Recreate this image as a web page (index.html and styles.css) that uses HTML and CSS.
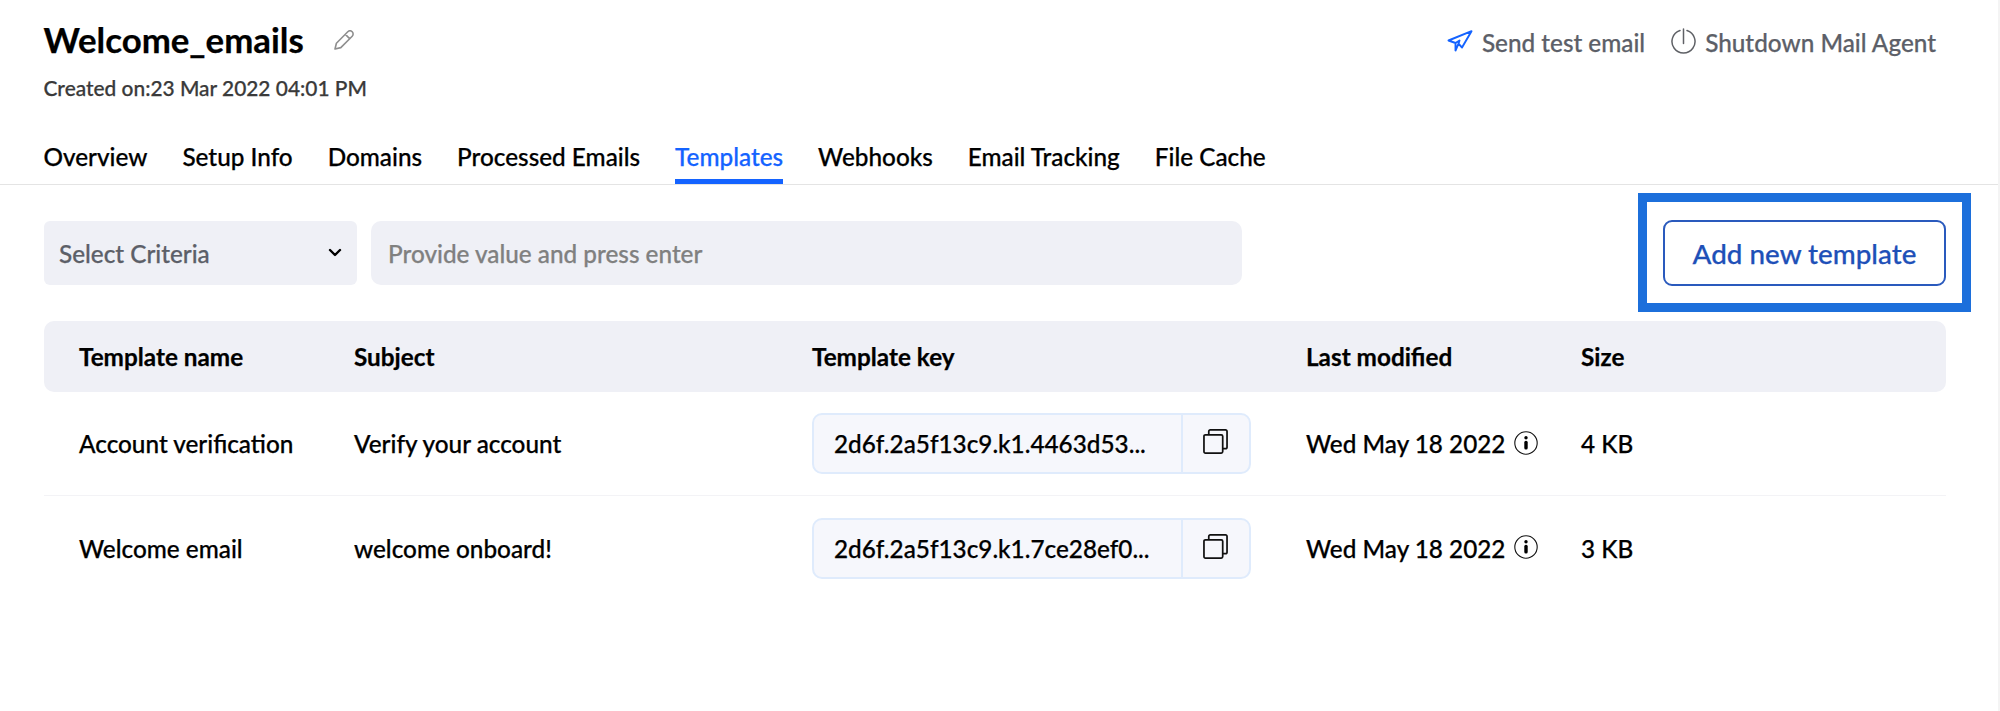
FILE: index.html
```html
<!DOCTYPE html>
<html lang="en">
<head>
  <meta charset="UTF-8">
  <meta name="viewport" content="width=device-width, initial-scale=1.0">
  <title>Welcome_emails - Templates</title>
  <link rel="stylesheet" href="styles.css">
</head>
<body>
  <div class="page">
    <header class="header">
      <div class="agent">
        <div class="agent-title">
          <h1>Welcome_emails</h1>
          <svg class="edit-icon" viewBox="0 0 20 20" fill="none" stroke="#8e8e8e" stroke-width="1.6" stroke-linejoin="round">
            <path d="M1 19l1.400-5.800L13.800 1.800a2.900 2.900 0 0 1 4.400 4.400L6.800 17.600z M11.400 4.400l4.200 4.200"/>
          </svg>
        </div>
        <p class="created">Created on:23 Mar 2022 04:01 PM</p>
      </div>
      <div class="header-actions">
        <a class="action">
          <svg class="send-icon" viewBox="0 0 26 22" fill="none" stroke="#1463ff" stroke-width="1.9" stroke-linejoin="round">
            <path d="M1.500 10.500L24.500 1.200 15 17.500l-3.500-3.800L8.500 20.500V13z M8.500 13L12.500 10.500 11.500 13.700"/>
          </svg>
          Send test email
        </a>
        <a class="action">
          <svg class="power-icon" viewBox="0 0 25 26" fill="none" stroke="#5f6166" stroke-width="1.5" stroke-linecap="round">
            <path d="M9 2.500a11.500 11.500 0 1 0 7 0M12.500 1v14.500"/>
          </svg>
          Shutdown Mail Agent
        </a>
      </div>
    </header>

    <nav class="tabs">
      <a>Overview</a>
      <a>Setup Info</a>
      <a>Domains</a>
      <a>Processed Emails</a>
      <a class="active">Templates</a>
      <a>Webhooks</a>
      <a>Email Tracking</a>
      <a>File Cache</a>
    </nav>

    <main class="content">
      <div class="toolbar">
        <div class="criteria">
          <span>Select Criteria</span>
          <svg class="chevron" viewBox="0 0 14 10" fill="none" stroke="#000" stroke-width="2.4" stroke-linecap="round" stroke-linejoin="round">
            <path d="M2 2l5 5 5-5"/>
          </svg>
        </div>
        <input class="search" type="text" placeholder="Provide value and press enter">
        <div class="highlight">
          <button type="button" class="add-button">Add new template</button>
        </div>
      </div>

      <div class="table">
        <div class="row table-head">
          <div>Template name</div>
          <div>Subject</div>
          <div>Template key</div>
          <div>Last modified</div>
          <div>Size</div>
        </div>
        <div class="row">
          <div>Account verification</div>
          <div>Verify your account</div>
          <div>
            <div class="key-box">
              <span class="key">2d6f.2a5f13c9.k1.4463d53...</span>
              <span class="copy">
                <svg viewBox="0 0 26 26" fill="none" stroke="#111" stroke-width="1.8">
                  <rect x="1" y="6" width="19.500" height="19" rx="1.5"/>
                  <path d="M6 6V2.500A1.500 1.500 0 0 1 7.500 1H23.500A1.500 1.500 0 0 1 25 2.500V19A1.500 1.500 0 0 1 23.500 20.500H20.500"/>
                </svg>
              </span>
            </div>
          </div>
          <div class="modified">
            Wed May 18 2022
            <svg class="info-icon" viewBox="0 0 24 24">
              <circle cx="12" cy="12" r="11.200" fill="none" stroke="#111" stroke-width="1.1"/>
              <circle cx="12" cy="6.800" r="1.700"/>
              <rect x="10.300" y="9.800" width="3.400" height="8.800" rx="1.600"/>
            </svg>
          </div>
          <div>4 KB</div>
        </div>
        <div class="row">
          <div>Welcome email</div>
          <div>welcome onboard!</div>
          <div>
            <div class="key-box">
              <span class="key">2d6f.2a5f13c9.k1.7ce28ef0...</span>
              <span class="copy">
                <svg viewBox="0 0 26 26" fill="none" stroke="#111" stroke-width="1.8">
                  <rect x="1" y="6" width="19.500" height="19" rx="1.5"/>
                  <path d="M6 6V2.500A1.500 1.500 0 0 1 7.500 1H23.500A1.500 1.500 0 0 1 25 2.500V19A1.500 1.500 0 0 1 23.500 20.500H20.500"/>
                </svg>
              </span>
            </div>
          </div>
          <div class="modified">
            Wed May 18 2022
            <svg class="info-icon" viewBox="0 0 24 24">
              <circle cx="12" cy="12" r="11.200" fill="none" stroke="#111" stroke-width="1.1"/>
              <circle cx="12" cy="6.800" r="1.700"/>
              <rect x="10.300" y="9.800" width="3.400" height="8.800" rx="1.600"/>
            </svg>
          </div>
          <div>3 KB</div>
        </div>
      </div>
    </main>
  </div>
</body>
</html>
```
FILE: styles.css
```css
* {
  box-sizing: border-box;
}

body {
  margin: 0;
  font-family: Lato, sans-serif;
  font-size: 24.3px;
  font-weight: 500;
  -webkit-text-stroke: 0.25px;
  color: #000;
  background-color: #fff;
}

.page {
  height: 711px;
  border-right: 2px solid #f4f4f4;
  overflow: hidden;
}

.header {
  display: flex;
  justify-content: space-between;
  height: 136px;
  padding: 19px 62px 0 43.5px;
}

.agent-title {
  display: flex;
  align-items: center;
  gap: 30px;
}

h1 {
  margin: 0;
  font-size: 34.8px;
  line-height: 42px;
  font-weight: bold;
}

.edit-icon {
  width: 20px;
  height: 20px;
}

.created {
  margin: 14px 0 0;
  font-size: 20.9px;
  line-height: 26px;
  color: #3a3a3a;
}

.header-actions {
  display: flex;
  gap: 26px;
  height: 46px;
  align-items: center;
}

.action {
  display: flex;
  align-items: center;
  gap: 9px;
  color: #5c5f68;
}

.send-icon {
  width: 26px;
  height: 22px;
  margin-bottom: 2px;
}

.power-icon {
  width: 25px;
  height: 26px;
  margin-bottom: 2px;
}

.tabs {
  display: flex;
  gap: 35px;
  height: 49px;
  padding-left: 43.5px;
  border-bottom: 1px solid #e4e4e4;
}

.tabs a {
  height: 48px;
  line-height: 42px;
}

.tabs .active {
  color: #1463ff;
  border-bottom: 5px solid #1463ff;
}

.content {
  padding: 36px 52px 0 44px;
}

.toolbar {
  display: flex;
  height: 64px;
}

.criteria {
  display: flex;
  align-items: center;
  justify-content: space-between;
  width: 313px;
  margin-right: 14px;
  padding: 0 15px;
  border-radius: 6px;
  background-color: #eff0f6;
  color: #5c5f68;
}

.chevron {
  width: 14px;
  height: 10px;
}

.search {
  width: 871px;
  padding: 1px 17px 0;
  border: none;
  border-radius: 10px;
  background-color: #eff0f6;
  font: inherit;
}

.search::placeholder {
  color: #808080;
}

.highlight {
  height: 119px;
  margin-top: -28px;
  margin-left: auto;
  margin-right: -25px;
  padding: 18px 16px 17px;
  border: 9px solid #1c6fdb;
}

.add-button {
  display: block;
  width: 283px;
  height: 66px;
  border: 2px solid #2a5abd;
  border-radius: 9px;
  background-color: #fff;
  color: #1e50b8;
  font: inherit;
  font-size: 27.8px;
}

.table {
  margin-top: 36px;
}

.row {
  display: grid;
  grid-template-columns: 275px 458px 494px 275px 1fr;
  align-items: center;
  height: 104px;
  padding-left: 35px;
  border-bottom: 1px solid #f3f3f6;
}

.row:last-child {
  border-bottom: none;
}

.table-head {
  height: 71px;
  border-bottom: none;
  border-radius: 10px;
  background-color: #eff0f6;
  font-weight: bold;
}

.key-box {
  display: flex;
  width: 439px;
  height: 61px;
  border: 2px solid #dfebfc;
  border-radius: 10px;
  background-color: #f6f7fc;
}

.key {
  flex: 1;
  padding-left: 20px;
  line-height: 57px;
}

.copy {
  width: 68px;
  border-left: 2px solid #dfebfc;
  padding: 14px 0 0 20px;
}

.copy svg {
  display: block;
  width: 25px;
  height: 25px;
}

.modified {
  display: flex;
  align-items: center;
  gap: 9px;
}

.info-icon {
  width: 24px;
  height: 24px;
  margin-bottom: 2px;
}
```
